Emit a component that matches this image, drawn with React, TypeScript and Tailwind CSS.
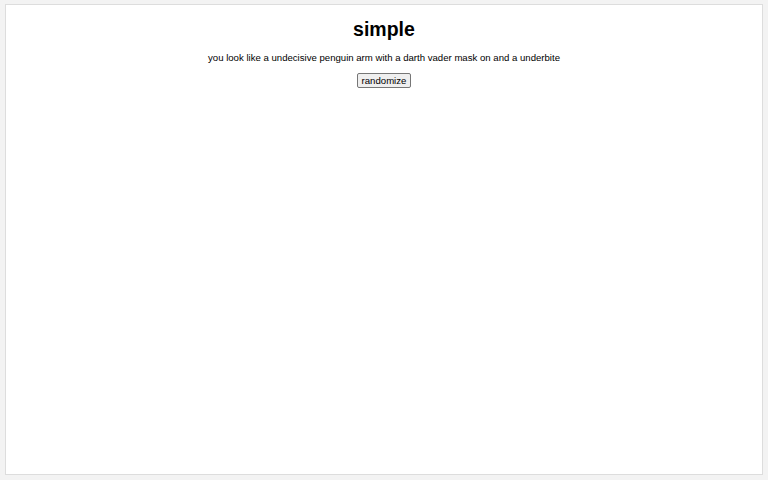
export default function App() {
  return (
    <div className="h-[480px] w-[768px] bg-[#f3f3f3] pt-[4px] pl-[5px] pr-[5px] pb-[5px] font-['Liberation_Sans',Arial,sans-serif]">
      <div className="h-full w-full bg-white border border-[#dddddd] flex flex-col items-center text-black">
        <h1 className="mt-[13px] text-[19.5px] leading-[22px] font-bold">simple</h1>
        <p className="mt-[12px] text-[9.6px] leading-[12px]">
          you look like a undecisive penguin arm with a darth vader mask on and a underbite
        </p>
        <button className="mt-[9px] text-[9.6px] leading-[11px] px-[4px] py-[1px] bg-[#efefef] border border-[#767676] rounded-[2px]">
          randomize
        </button>
      </div>
    </div>
  )
}
